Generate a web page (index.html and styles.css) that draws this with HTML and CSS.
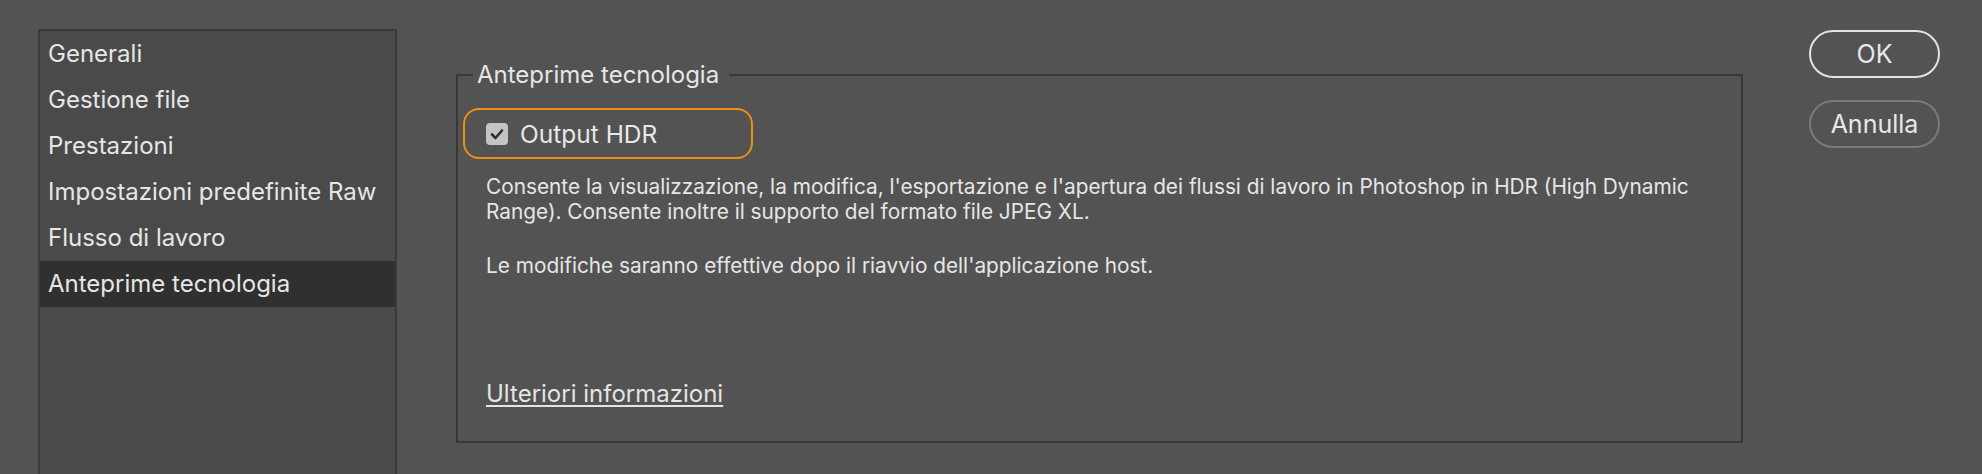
FILE: index.html
```html
<!DOCTYPE html>
<html lang="it">
<head>
<meta charset="utf-8">
<title>Preferenze</title>
<link rel="stylesheet" href="styles.css">
</head>
<body>
<div class="dialog">
  <nav class="sidebar">
    <div class="item">Generali</div>
    <div class="item">Gestione file</div>
    <div class="item">Prestazioni</div>
    <div class="item">Impostazioni predefinite Raw</div>
    <div class="item">Flusso di lavoro</div>
    <div class="item selected">Anteprime tecnologia</div>
  </nav>
  <fieldset class="group">
    <legend class="group-title">Anteprime tecnologia</legend>
    <label class="option">
      <span class="checkbox">
        <svg viewBox="0 0 22 22" width="22" height="22"><path d="M6 11.5 L9.5 15 L16 7.5" fill="none" stroke="#2e2e2e" stroke-width="2.6" stroke-linecap="round" stroke-linejoin="round"/></svg>
      </span>
      <span class="option-label">Output HDR</span>
    </label>
    <p class="desc">Consente la visualizzazione, la modifica, l'esportazione e l'apertura dei flussi di lavoro in Photoshop in HDR (High Dynamic Range). Consente inoltre il supporto del formato file JPEG XL.</p>
    <p class="desc note">Le modifiche saranno effettive dopo il riavvio dell'applicazione host.</p>
    <a class="more" href="#">Ulteriori informazioni</a>
  </fieldset>
  <div class="buttons">
    <button class="btn primary">OK</button>
    <button class="btn">Annulla</button>
  </div>
</div>
</body>
</html>
```

FILE: styles.css
```css
html, body {
  margin: 0;
  padding: 0;
  background: #535353;
}
body {
  font-family: Inter, "Noto Sans", "Liberation Sans", sans-serif;
  color: #e4e4e4;
  width: 1982px;
  height: 474px;
  overflow: hidden;
}
.dialog {
  display: flex;
  align-items: flex-start;
  padding: 29px 0 0 38px;
  height: 474px;
  box-sizing: border-box;
}
.sidebar {
  width: 359px;
  height: 445px;
  flex: none;
  box-sizing: border-box;
  border: 2px solid #3a3a3a;
  border-bottom: none;
  background: #4a4a4a;
}
.item {
  height: 46px;
  line-height: 46px;
  padding-left: 8px;
  font-size: 24px;
  color: #e6e6e6;
  white-space: nowrap;
}
.item.selected {
  background: #303030;
}
.group {
  flex: none;
  box-sizing: border-box;
  width: 1287px;
  height: 383px;
  margin: 31px 0 0 59px;
  padding: 0 0 0 25px;
  border: 2px solid #383838;
  min-width: 0;
}
.group-title {
  font-size: 24px;
  line-height: 30px;
  padding: 0 10px 0 4px;
  margin-left: -10px;
  color: #e6e6e6;
}
.option {
  display: flex;
  align-items: center;
  box-sizing: border-box;
  width: 290px;
  height: 51px;
  margin: 18px 0 0 -20px;
  padding-left: 21px;
  gap: 12px;
  border: 2.5px solid #ec8f10;
  border-radius: 16px;
}
.checkbox {
  width: 22px;
  height: 22px;
  border-radius: 4px;
  background: #c4c4c4;
  display: flex;
}
.option-label {
  font-size: 24.5px;
  color: #e8e8e8;
}
.desc {
  margin: 14.5px 0 0 3px;
  font-size: 20.8px;
  line-height: 25px;
  color: #e6e6e6;
  width: 1225px;
}
.desc.note {
  margin-top: 29px;
}
.more {
  display: inline-block;
  margin: 101px 0 0 3px;
  font-size: 24px;
  line-height: 30px;
  color: #e4e4e4;
  text-decoration: underline;
  text-decoration-thickness: 2px;
  text-underline-offset: 3px;
}
.buttons {
  flex: none;
  display: flex;
  flex-direction: column;
  gap: 22px;
  margin: 1px 0 0 66px;
}
.btn {
  width: 131px;
  height: 48px;
  border-radius: 24px;
  background: transparent;
  font-family: Inter, "Noto Sans", "Liberation Sans", sans-serif;
  font-size: 25px;
  color: #e8e8e8;
  border: 2px solid #7a7a7a;
  padding: 0;
}
.btn.primary {
  border-color: #e2e2e2;
}
```
